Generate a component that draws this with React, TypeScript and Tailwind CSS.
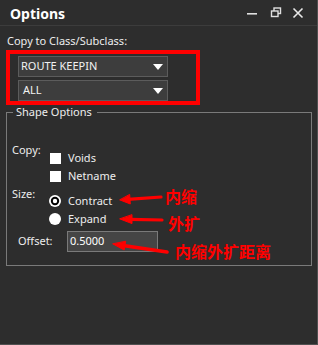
import { FC } from "react";

const Dropdown: FC<{ label: string; pad: string }> = ({ label, pad }) => (
  <div
    className={`flex h-[21px] w-[150px] items-center justify-between border border-[#5c5c5c] bg-[#3d3d3d] pr-[4px] text-[11px] text-[#f2f2f2] ${pad}`}
  >
    <span>{label}</span>
    <svg width="10" height="6" viewBox="0 0 10 6">
      <polygon points="0,0 10,0 5,6" fill="#ffffff" />
    </svg>
  </div>
);

const Radio: FC<{ checked?: boolean }> = ({ checked }) => (
  <svg width="12" height="12" viewBox="0 0 12 12">
    <circle cx="6" cy="6" r="6" fill="#ffffff" />
    {checked && (
      <>
        <circle cx="6" cy="6" r="4.2" fill="#000000" />
        <circle cx="6" cy="6" r="2.2" fill="#ffffff" />
      </>
    )}
  </svg>
);

const App: FC = () => {
  return (
    <div
      className="relative h-[345px] w-[318px] border-r border-b border-[#505050] bg-[#2d2d2d] text-[#ededed]"
      style={{ fontFamily: '"Noto Sans", "Noto Sans CJK SC", sans-serif' }}
    >
      {/* title bar */}
      <div className="flex h-[26px] items-center border-b border-[#3c3c3c] pt-[1px] pl-[10px]">
        <span className="text-[14px] font-bold text-white">Options</span>
        <svg className="ml-auto" width="12" height="12" viewBox="0 0 12 12">
          <rect x="1" y="6" width="10" height="1.6" fill="#e0e0e0" />
        </svg>
        <svg className="ml-[12px]" width="12" height="12" viewBox="0 0 12 12">
          <rect x="4" y="1" width="6.5" height="5.5" fill="none" stroke="#e0e0e0" strokeWidth="1.4" />
          <rect x="1.5" y="4" width="6.5" height="5.5" fill="#2d2d2d" stroke="#e0e0e0" strokeWidth="1.4" />
        </svg>
        <svg className="mr-[13px] ml-[10px]" width="12" height="12" viewBox="0 0 12 12">
          <path d="M1.5 1.5 L10.5 10.5 M10.5 1.5 L1.5 10.5" stroke="#e8e8e8" strokeWidth="1.6" />
        </svg>
      </div>

      <div className="mt-[7px] pl-[7px] text-[11px] leading-[16px]">Copy to Class/Subclass:</div>

      <div className="mt-[1px] ml-[6px] flex w-[194px] flex-col gap-[3px] border-4 border-[#ff0000] pt-[2px] pl-[8px]">
        <Dropdown label="ROUTE KEEPIN" pad="pl-[2px]" />
        <Dropdown label="ALL" pad="pl-[4px]" />
      </div>

      <fieldset className="ml-[6px] h-[161px] w-[306px] border border-[#7a7a7a] text-[11px]">
        <legend className="ml-[6px] pr-[5px] pl-[3px] leading-[14px]">Shape Options</legend>

        <div className="flex pt-[23px] pl-[5px] leading-[16px]">
          <div className="w-[38px]">Copy:</div>
          <div className="mt-[7px] flex flex-col">
            <div className="flex h-[18px] items-center gap-[7px]">
              <span className="h-[11px] w-[11px] bg-white" />
              <span>Voids</span>
            </div>
            <div className="flex h-[18px] items-center gap-[7px]">
              <span className="h-[11px] w-[11px] bg-white" />
              <span>Netname</span>
            </div>
          </div>
        </div>

        <div className="mt-[1px] flex pl-[5px] leading-[16px]">
          <div className="w-[37px]">Size:</div>
          <div className="mt-[6px] flex flex-col">
            <div className="flex h-[18px] items-center gap-[7px]">
              <Radio checked />
              <span>Contract</span>
            </div>
            <div className="flex h-[18px] items-center gap-[7px]">
              <Radio />
              <span>Expand</span>
            </div>
          </div>
        </div>

        <div className="mt-[3px] flex items-center pl-[11px]">
          <div className="w-[49px]">Offset:</div>
          <div className="flex h-[21px] w-[91px] items-center border border-[#7a7a7a] bg-[#454545] pl-[2px] text-white">
            0.5000
          </div>
        </div>
      </fieldset>

      {/* red annotations */}
      <svg className="pointer-events-none absolute top-0 left-0" width="318" height="345" viewBox="0 0 318 345">
        <g fill="#ff0000" stroke="#ff0000" strokeLinecap="round">
          <line x1="161" y1="197" x2="128" y2="199.4" strokeWidth="3.2" />
          <polygon points="120,200 130.3,204 129.7,194.8" strokeWidth="1" />
          <line x1="162" y1="220" x2="130" y2="219.3" strokeWidth="3.2" />
          <polygon points="120,219 132,223.6 132,215" strokeWidth="1" />
          <line x1="167" y1="252" x2="123" y2="245.5" strokeWidth="3.6" />
          <polygon points="113,244 124.2,250 125.6,241.6" strokeWidth="1" />
        </g>
      </svg>
      <div className="pointer-events-none absolute top-[189px] left-[165px] text-[16px] leading-[16px] font-bold text-[#ff0000]">
        内缩
      </div>
      <div className="pointer-events-none absolute top-[216px] left-[168px] text-[16px] leading-[16px] font-bold text-[#ff0000]">
        外扩
      </div>
      <div className="pointer-events-none absolute top-[244px] left-[175px] text-[16px] leading-[16px] font-bold text-[#ff0000]">
        内缩外扩距离
      </div>
    </div>
  );
};

export default App;
